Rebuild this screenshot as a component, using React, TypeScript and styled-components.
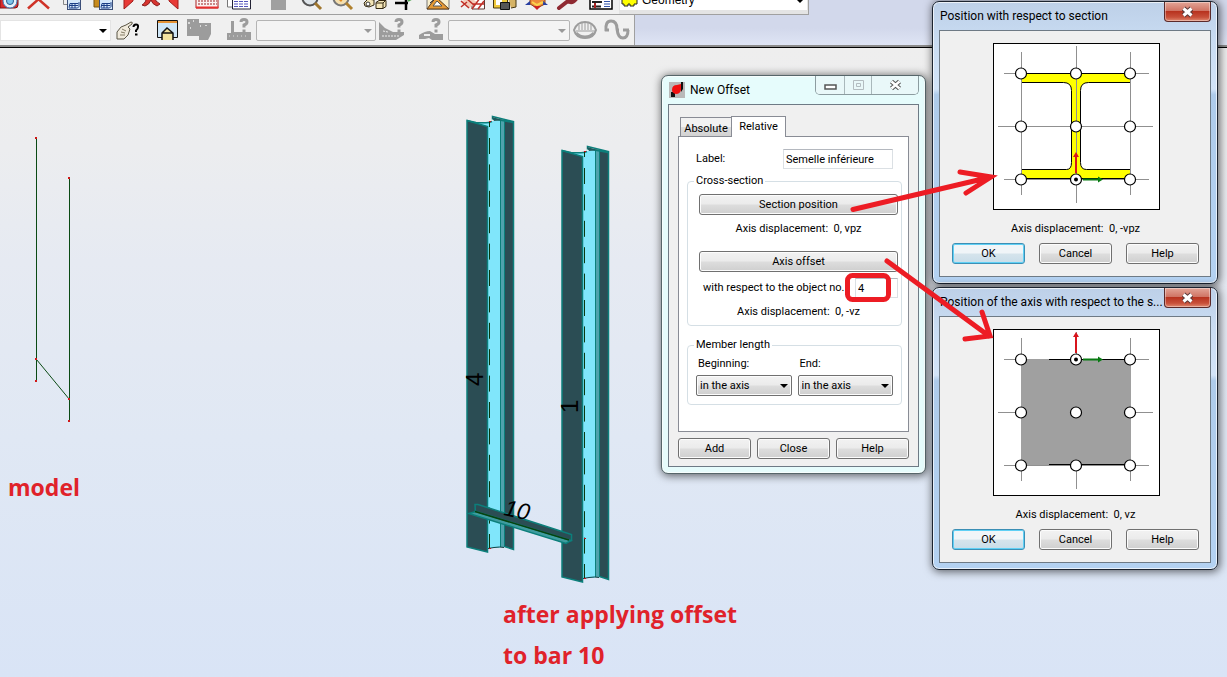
import React from "react";
import styled, { createGlobalStyle, css } from "styled-components";

const ui = 'Roboto, "Liberation Sans", sans-serif';
const caption = 'Roboto, "Noto Sans", sans-serif';
const red = "#ed1c24";

const GlobalStyle = createGlobalStyle`
  *, *::before, *::after { box-sizing: border-box; }
  body { margin: 0; }
  button, input, select, legend, label { font: inherit; color: inherit; }
`;

const Desktop = styled.div`
  position: relative;
  display: flex;
  flex-direction: column;
  min-height: 100vh;
  overflow: hidden;
  font: 11px/16px ${ui};
  color: #000;
`;

/* ---------- toolbars ---------- */

const ToolArea = styled.header`
  background: linear-gradient(#d2d8eb 60%, #e0e6f6);
  border-bottom: 1px solid #000;
  box-shadow: inset 0 -2px 0 #8c8c8c;
  padding-bottom: 2px;
`;

const ToolRow = styled.div<{ $height: number; $clipped?: boolean }>`
  display: flex;
  width: fit-content;
  height: ${(p) => p.$height}px;
  align-items: ${(p) => (p.$clipped ? "flex-end" : "center")};
  overflow: hidden;
  background: #f0f0f0;
  border-right: 1px solid #a0a0a0;
  ${(p) => p.$clipped && css`border-bottom: 1px solid #a0a0a0;`}
`;

const ToolButton = styled.button`
  display: block;
  flex: none;
  padding: 0;
  border: 0;
  background: none;
  svg { display: block; }
`;

const ToolCombo = styled.div<{ $width: number; $tone: "open" | "off" | "bare" }>`
  position: relative;
  flex: none;
  width: ${(p) => p.$width}px;
  select {
    appearance: none;
    display: block;
    width: 100%;
    height: ${(p) => (p.$tone === "bare" ? 26 : 21)}px;
    padding: 0 20px 0 ${(p) => (p.$tone === "bare" ? 22 : 4)}px;
    border: ${(p) => (p.$tone === "off" ? "1px solid #b4b4b4" : "1px solid #e4e4e4")};
    border-bottom-width: ${(p) => (p.$tone === "bare" ? 4 : 1)}px;
    border-radius: ${(p) => (p.$tone === "off" ? 2 : 0)}px;
    background: ${(p) => (p.$tone === "off" ? "#f4f4f4" : "#fff")};
    font: 12px/16px "Liberation Sans", sans-serif;
    opacity: 1;
  }
  svg { position: absolute; pointer-events: none; }
  .arrow { right: 4px; top: ${(p) => (p.$tone === "bare" ? 11 : 9)}px; }
  .tag { left: 2px; bottom: 7px; }
`;

/* ---------- windows ---------- */

const Frame = styled.section<{ $left: number; $top: number; $width: number; $blue?: boolean }>`
  position: absolute;
  left: ${(p) => p.$left}px;
  top: ${(p) => p.$top}px;
  width: ${(p) => p.$width}px;
  padding: 0 6px 6px;
  border: 1px solid ${(p) => (p.$blue ? "#1c2430" : "#56666a")};
  border-radius: 7px;
  background: ${(p) =>
    p.$blue
      ? "linear-gradient(#bdd0e8 0, #c9dcf2 14%, #d3e4f8 31%, #aecbea 33%, #b4d2f2 100%)"
      : "#e6fcfc"};
  box-shadow: inset 0 0 0 1px #ffffffb0, 1px 1px 9px 1px #00000090;
`;

const TitleBar = styled.div`
  display: flex;
  align-items: flex-start;
  height: 28px;
`;

const Title = styled.h2`
  flex: 1;
  min-width: 0;
  margin: 5px 0 0 1px;
  font: 400 12px/18px ${caption};
  white-space: nowrap;
`;

const AppIcon = styled.svg`
  margin: 6px 4px 0 1px;
`;

const CaptionButtons = styled.div`
  display: flex;
  height: 19px;
  border: 1px solid #8c9ca0;
  border-top: 0;
  border-radius: 0 0 5px 5px;
  overflow: hidden;
`;

const CaptionButton = styled.button<{ $width: number }>`
  width: ${(p) => p.$width}px;
  padding: 0;
  border: 0;
  background: #e9f8f9;
  & + & { border-left: 1px solid #a9b8bb; }
  svg { display: block; margin: 0 auto; }
`;

const CloseButton = styled.button`
  flex: none;
  width: 47px;
  height: 20px;
  padding: 0;
  border: 1px solid #5b2a2a;
  border-top: 0;
  border-radius: 0 0 4px 4px;
  background: linear-gradient(#e3a597 0, #d07565 45%, #b8331f 50%, #c8503a 80%, #e08a70);
  box-shadow: inset 0 0 0 1px #ffffff60;
  svg { display: block; margin: 0 auto; }
`;

const Client = styled.div<{ $pad: string }>`
  padding: ${(p) => p.$pad};
  border: 1px solid #6e7a85;
  background: #f0f0f0;
`;

const PushButton = styled.button<{ $width: number; $primary?: boolean }>`
  flex: none;
  display: block;
  width: ${(p) => p.$width}px;
  height: 21px;
  padding: 0;
  border: 1px solid ${(p) => (p.$primary ? "#3c8fb5" : "#707070")};
  border-radius: 3px;
  line-height: 19px;
  background: ${(p) =>
    p.$primary
      ? "linear-gradient(#f0f5f8 48%, #d5e4ec 52%, #c8dde9)"
      : "linear-gradient(#f2f2f2 0, #ebebeb 48%, #dddddd 52%, #cfcfcf)"};
  box-shadow: inset 0 0 0 1px ${(p) => (p.$primary ? "#5fd0f5" : "#fcfcfc")};
`;

const ButtonRow = styled.div<{ $top: number }>`
  display: flex;
  justify-content: space-between;
  margin-top: ${(p) => p.$top}px;
`;

const Tabs = styled.div`
  display: flex;
  align-items: flex-end;
  padding-left: 2px;
`;

const Tab = styled.button<{ $active?: boolean }>`
  position: relative;
  height: ${(p) => (p.$active ? 21 : 19)}px;
  width: ${(p) => (p.$active ? 55 : 52)}px;
  margin-bottom: ${(p) => (p.$active ? -1 : 0)}px;
  padding: ${(p) => (p.$active ? 0 : 2)}px 0 0;
  border: 1px solid #898c95;
  border-bottom: 0;
  & + & { margin-left: -1px; }
  line-height: 18px;
  background: ${(p) => (p.$active ? "#fff" : "linear-gradient(#f2f2f2 48%, #dedede 52%, #d2d2d2)")};
`;

const TabPanel = styled.div`
  height: 296px;
  padding: 12px 6px 0 8px;
  border: 1px solid #898c95;
  background: #fff;
`;

const LabelRow = styled.div`
  display: flex;
  align-items: center;
  justify-content: space-between;
  padding: 0 9px;
`;

const TextBox = styled.input<{ $width: number }>`
  width: ${(p) => p.$width}px;
  height: 20px;
  padding: 0 3px 0 2px;
  border: 1px solid #dbe0e4;
  border-top-color: #b4b8bf;
  background: #fff;
`;

const Group = styled.fieldset<{ $top: number; $pad: string }>`
  min-width: 0;
  margin: ${(p) => p.$top}px 0 0;
  padding: ${(p) => p.$pad};
  border: 1px solid #d5dfe5;
  border-radius: 4px;
  legend {
    margin-left: -2px;
    padding: 0 2px;
    line-height: 14px;
  }
`;

const GroupRows = styled.div`
  padding-left: 3px;
`;

const Note = styled.p<{ $top: number; $bottom?: number }>`
  margin: ${(p) => p.$top}px 0 ${(p) => p.$bottom ?? 0}px;
  text-align: center;
  white-space: pre;
`;

const ObjectRow = styled.div`
  display: flex;
  align-items: center;
  justify-content: space-between;
  height: 20px;
  margin-top: 6px;
  padding-left: 4px;
  white-space: nowrap;
`;

const Pair = styled.div`
  display: flex;
  gap: 6px;
`;

const Choice = styled.div`
  position: relative;
  width: 96px;
  label { display: block; margin: 0 0 3px 2px; }
  select {
    appearance: none;
    display: block;
    width: 100%;
    height: 21px;
    padding: 0 3px;
    border: 1px solid #707070;
    border-radius: 2px;
    background: linear-gradient(#f2f2f2 0, #ebebeb 48%, #dddddd 52%, #cfcfcf);
    box-shadow: inset 0 0 0 1px #fcfcfc;
  }
  svg { position: absolute; right: 4px; bottom: 8px; pointer-events: none; }
`;

const Picture = styled.svg`
  display: block;
  width: 167px;
  height: 167px;
  margin-left: 41px;
  border: 1px solid #000;
  background: #fff;
`;

/* ---------- drawing area ---------- */

const Canvas = styled.main`
  position: relative;
  flex: 1;
  background: linear-gradient(#eeeeee 0, #ecedef 16%, #e6eaf2 34%, #e0e8f4 62%, #d9e4f6 100%);
`;

const Scene = styled.svg`
  position: absolute;
  left: 0;
  top: 0;
`;

const Remark = styled.p<{ $left: number; $top: number }>`
  position: absolute;
  left: ${(p) => p.$left}px;
  top: ${(p) => p.$top}px;
  margin: 0;
  font: 700 23px/41px "Open Sans", "Noto Sans", sans-serif;
  color: #e0222a;
  white-space: pre-line;
`;

const Markup = styled.svg`
  position: absolute;
  left: 840px;
  top: 160px;
  pointer-events: none;
`;

const DownArrow = ({ color = "#000", className }: { color?: string; className?: string }) => (
  <svg className={className} width="8" height="4" viewBox="0 0 8 4">
    <path d="M0 0h8L4 4z" fill={color} />
  </svg>
);

type Tool = { name: string; x: number; w: number; art: React.ReactNode };

const table = (x: number) => (
  <g>
    <rect x={x + 5.5} y="-3.500" width="13" height="13" fill="#d5e8fa" stroke="#3c4f78" />
    <path d={`M${x + 7} 7.500l1-4h8l1-1v4l-1.500 1.500h-8.500M${x + 10} 4v4M${x + 13} 4v4M${x + 7} 5.500h9`} fill="none" stroke="#1c3f86" />
  </g>
);

const mainTools: Tool[] = [
  { name: "Capture", x: 0, w: 24, art: <g><path d="M0-2h18v7q0 3-3 3H0z" fill="#d92b2b" stroke="#7c1414" /><circle cx="10" cy="1" r="7" fill="#e8f3fb" stroke="#3b7cb8" /><circle cx="10" cy="1" r="3.500" fill="#7cc4ec" stroke="#2d5f90" /></g> },
  { name: "Delete", x: 24, w: 32, art: <path d="M28 8.500 41-3M49 8.500 36-3" stroke="#cf3328" strokeWidth="2.500" fill="none" /> },
  { name: "Copy", x: 56, w: 32, art: <g><path d="M63.500-2v6.500h6" fill="#eee" stroke="#888" />{table(62)}</g> },
  { name: "Paste", x: 88, w: 32, art: <g><path d="M94-2h10v9H94z" fill="#c88b1c" stroke="#76520f" />{table(94)}</g> },
  { name: "Previous", x: 120, w: 20, art: <path d="M124-3v12l9-8v-4z" fill="#e83a36" stroke="#a01c1a" /> },
  { name: "Up", x: 140, w: 26, art: <path d="M142 5q4-2 5-9h7q1 6 6 8l-3 2q-5-2-6-6-2 5-6 6z" fill="#d83530" stroke="#8c2020" /> },
  { name: "Next", x: 166, w: 24, art: <path d="M178-3v12l-9-8v-4z" fill="#e83a36" stroke="#a01c1a" /> },
  { name: "Calculator", x: 190, w: 34, art: <g><path d="M196-3h22v11h-22z" fill="#fbf3f3" stroke="#a22" /><path d="M198 1h19M198 4h19" stroke="#b66" strokeWidth="1.500" strokeDasharray="2 1" /><path d="M196 7.500h22.500" stroke="#e83030" strokeWidth="2" /></g> },
  { name: "Tables", x: 224, w: 36, art: <g><path d="M227.500-2h14v9h-14z" fill="#fff" stroke="#777" /><path d="M232.500-2h18v11h-18z" fill="#fff" stroke="#223" /><path d="M234 1.500h15M234 4h15M234 6.500h15" stroke="#55b" strokeDasharray="4 1" /></g> },
  { name: "Stop", x: 260, w: 38, art: <path d="M271-2h15v12h-15z" fill="#a0a0a0" /> },
  { name: "Zoom", x: 298, w: 30, art: <g><circle cx="310" cy="-2" r="7.500" fill="#dfe5ea" stroke="#555" strokeWidth="2" /><path d="m315 3 6 6" stroke="#a0762e" strokeWidth="3" /></g> },
  { name: "Zoom window", x: 328, w: 32, art: <g><circle cx="341" cy="-2" r="7.500" fill="#f5dfae" stroke="#777" strokeWidth="2" /><path d="M337-2h7l-3 4z" fill="#e58c1e" /><path d="m346 3 6 6" stroke="#b0802e" strokeWidth="3" /></g> },
  { name: "View", x: 360, w: 32, art: <g><path d="M364 3l4-4 6 1v5l-5 2-4-1zM376 8.500v-6l3-2h7v6l-3 2zM376 3h7v5M383 3l3-3" fill="#f4e6b8" stroke="#342812" /><circle cx="368" cy="4" r="2" fill="#fff" stroke="#333" /></g> },
  { name: "Axes", x: 392, w: 32, art: <g><path d="M395 3h13M406-3v13" stroke="#000" strokeWidth="2.500" /><path d="m408 1 5-3" stroke="#4ea34e" strokeWidth="2" /></g> },
  { name: "Measure", x: 424, w: 32, art: <g><path d="M427-2h22v11h-22z" fill="#f8efcf" stroke="#777" /><path d="M427 9h22L436-3z" fill="#e69a36" stroke="#5b3b18" /><path d="M433 6h9l-5-5z" fill="#fff" stroke="#555" /><path d="m430 3 7-6" stroke="#223" /></g> },
  { name: "Section", x: 456, w: 32, art: <g><path d="M472-2h12.500v11H472z" fill="#fff" stroke="#5f3a35" /><path d="m461 2 8-5 8 5-8 6z" fill="#f4cdbb" /><path d="m461 1 8 7M466-2l9 8M472 9l8-11M478 9l6-8M473 4h11M461 7l6-5" stroke="#c03028" strokeWidth="1.500" /></g> },
  { name: "Layers", x: 488, w: 32, art: <g><path d="M493.500-3h14v11h-14z" fill="#efc83a" stroke="#4a3a10" /><path d="M496-2h6v7h-6z" fill="#fff" /><path d="M508-2h5l3 2v7l-5 1" fill="#d5b366" stroke="#453614" /><path d="M500.500 2.500h9v7h-9z" fill="#555" stroke="#111" /></g> },
  { name: "Explode", x: 520, w: 34, art: <g><path d="m530-2 7-2 8 2v6l-8 4-7-4z" fill="#ed8a3b" stroke="#8c4114" /><path d="m525 5 5-4v4zM548 5l-5-4v4z" fill="#283fa0" /><path d="m533 6 4 4 4-4z" fill="#c22" /><path d="m532 2 5 3 6-3" fill="none" stroke="#fbd24d" strokeWidth="2" /></g> },
  { name: "Wrench", x: 554, w: 32, art: <path d="m559 8 9-7q-1-5 5-5M568 1q4 3 8-2" fill="none" stroke="#8f2a32" strokeWidth="4" strokeLinecap="round" /> },
  { name: "Options", x: 586, w: 33, art: <g><path d="M590-3h22v12h-22z" fill="#fff" stroke="#000" strokeWidth="1.500" /><path d="M592 2h10M592 6.500h9" stroke="#222" strokeWidth="2" /><path d="M595 3v5" stroke="#a22" strokeWidth="2" /><path d="M604 1.500h6M604 4h6M604 6.500h6" stroke="#35a" /></g> },
];

const gray = "#9c9c9c";
const questionMark = (x: number) => (
  <path d={`M${x} 22q0-2.500 3-2.500t3 2.500q0 2-3 3v2.500M${x + 1.5} 31h3`} fill="none" stroke={gray} strokeWidth="3" />
);

const helpTools: Tool[] = [
  { name: "What is this", x: 111, w: 37, art: <g><path d="m117 32 4-5 5-2 5-3q2 0 1 2l-4 3 2 2-2 6-4 4h-7z" fill="#f0eadc" stroke="#5b5646" /><path d="m122 29 4 2M121 32l4 1M120 35l5 0" stroke="#847c66" /><path d="M133.500 27q0-2.500 2.500-2.500t2 2.500q0 2-2 3.500v1.500M135 34.500h2.500" fill="none" stroke="#000" strokeWidth="2" /></g> },
  { name: "Supports", x: 148, w: 35, art: <g><path d="M157.500 20.500h20v17h-20z" fill="#cfe6f7" stroke="#111" /><path d="M158 21h19v2h-19z" fill="#e59336" /><path d="M162 40v-7l5-5 6 5v7M162 33h11" fill="#f2e3a0" stroke="#111" strokeWidth="1.500" /></g> },
  { name: "Releases", x: 183, w: 35, art: <g><path d="M187 19h12v4h12v11l-3 6h-9v-4h-12z" fill={gray} /><path d="M189 22v2M193 21h1M190 28h1M200 26h1M206 25v1" stroke="#eee" strokeWidth="1.500" /></g> },
  { name: "Loads", x: 218, w: 38, art: <g><path d="M227 33h4V21h3v11h17v8h-24z" fill={gray} />{questionMark(241)}<path d="M229 36h20" stroke="#ddd" strokeDasharray="1 3" /></g> },
];
const chartTools: Tool[] = [
  { name: "Diagrams", x: 376, w: 35, art: <g><path d="M379 22l6 6 8 4h11v3l-8 5h-17z" fill={gray} />{questionMark(396)}<path d="M382 36h17M383 31l5 1" stroke="#eee" strokeDasharray="2 1" /></g> },
  { name: "Results", x: 411, w: 37, art: <g><path d="M419 39v-4q6-4 11-4l5 3h8v6h-11l-3-2-4 1z" fill={gray} /><path d="M424 35h6" stroke="#eee" strokeWidth="2" />{questionMark(433)}</g> },
];
const waveTools: Tool[] = [
  { name: "Envelope", x: 570, w: 30, art: <g fill="none" stroke={gray} strokeWidth="2"><path d="M574 30q3-8 11-8t11 8q-2 8-11 8t-11-8z" /><path d="M576 31h19M579 30v-5M582 30v-7M585 30v-7M588 30v-7M591 30v-6" strokeWidth="1" /><path d="M576 33q4 4 9 4t9-4" strokeWidth="3" /></g> },
  { name: "Wave", x: 600, w: 34, art: <path d="M606 31q-1-10 5-10t6 8q1 9 6 9t5-8M605 30h4M616 30h3M623 30h6" fill="none" stroke={gray} strokeWidth="3" /> },
];

const Tools = ({ items, y, h }: { items: Tool[]; y: number; h: number }) => (
  <>
    {items.map((t) => (
      <ToolButton key={t.name} type="button" aria-label={t.name}>
        <svg width={t.w} height={h} viewBox={`${t.x} ${y} ${t.w} ${h}`}>{t.art}</svg>
      </ToolButton>
    ))}
  </>
);

const GridPicture = ({ kind }: { kind: "beam" | "block" }) => {
  const xs = [27, 82, 136];
  const ys = [29, 82, 135];
  const origin = kind === "beam" ? 135 : 29;
  return (
    <Picture viewBox="0 0 165 165" role="img" aria-label={kind === "beam" ? "I-section" : "Bounding block"}>
      {kind === "beam" ? (
        <path
          d="M27.500 29.500h109v9H94.500q-8 0-8 8v72q0 7 6 7h44v9h-109v-9h45q5 0 5-7v-72q0-8-8-8H27.500z"
          fill="#ff0"
          stroke="#000"
        />
      ) : null}
      <path
        d="M10 29.500h145M4 82.500h155M10 135.500h145M27.500 8v143M82.500 2v157M136.500 8v143"
        stroke="#909090"
        fill="none"
      />
      {kind === "beam" ? (
        <path d="M27 29.500h110M27 134.500h110" stroke="#000" />
      ) : (
        <g>
          <path d="M27 29h110v106H27z" fill="#a0a0a0" />
          <path d="M55 29.500h81M55 134.500h81" stroke="#000" />
        </g>
      )}
      {ys.map((y) =>
        xs.map((x) => (
          <circle key={`${x}-${y}`} cx={x} cy={y + 0.5} r="5.500" fill="#fff" stroke="#000" strokeWidth="1.200" />
        )),
      )}
      <circle cx="82" cy={origin + 0.5} r="2" />
      <path d={`M82 ${origin - 6}V${origin - 23}`} stroke="#d8141c" strokeWidth="2" />
      <path d={`M79 ${origin - 22}l3-5 3 5z`} fill="#d8141c" />
      <path d={`M89 ${origin + 0.5}h17`} stroke="#087a12" strokeWidth="2" />
      <path d={`M104 ${origin - 2.5}l5 3-5 3z`} fill="#087a12" />
    </Picture>
  );
};

const PositionDialog = ({ top, title, kind, note }: { top: number; title: string; kind: "beam" | "block"; note: string }) => (
  <Frame $left={932} $top={top} $width={286} $blue>
    <TitleBar>
      <Title>{title}</Title>
      <CloseButton type="button" aria-label="Close">
        <svg width="15" height="12" viewBox="0 0 15 12">
          <path d="m3.500 2.500 8 7M11.500 2.500l-8 7" stroke="#5a3a3a" strokeWidth="5" />
          <path d="m3.500 2.500 8 7M11.500 2.500l-8 7" stroke="#fff" strokeWidth="3" />
        </svg>
      </CloseButton>
    </TitleBar>
    <Client $pad="12px 11px 12px 12px">
      <GridPicture kind={kind} />
      <Note $top={11}>{note}</Note>
      <ButtonRow $top={6}>
        <PushButton type="button" $width={73} $primary>OK</PushButton>
        <PushButton type="button" $width={73}>Cancel</PushButton>
        <PushButton type="button" $width={73}>Help</PushButton>
      </ButtonRow>
    </Client>
  </Frame>
);

const Choose = ({ id, label }: { id: string; label: string }) => (
  <Choice>
    <label htmlFor={id}>{label}</label>
    <select id={id}>
      <option>in the axis</option>
    </select>
    <DownArrow />
  </Choice>
);

const OffsetDialog = () => (
  <Frame $left={661} $top={75} $width={265}>
    <TitleBar>
      <AppIcon width="16" height="16" viewBox="0 0 16 16">
        <path d="M0 0h16v16H0z" fill="#b9b9b9" />
        <path d="M12 0h2v7l-2 3zM2 10h4v5H2z" fill="#111" />
        <path d="M3 8q0-5 5-5l4-1v6q-1 4-5 4-4-1-4-4z" fill="#f01010" />
      </AppIcon>
      <Title>New Offset</Title>
      <CaptionButtons>
        <CaptionButton type="button" aria-label="Minimize" $width={28}>
          <svg width="13" height="10" viewBox="0 0 13 10"><path d="M1 5h11v4H1z" fill="#fff" stroke="#555" strokeWidth="1.500" /></svg>
        </CaptionButton>
        <CaptionButton type="button" aria-label="Maximize" $width={27}>
          <svg width="13" height="10" viewBox="0 0 13 10"><path d="M1.500.5h10v9h-10zM4.500 3.500h4v3h-4z" fill="none" stroke="#b3bcc0" /></svg>
        </CaptionButton>
        <CaptionButton type="button" aria-label="Close" $width={47}>
          <svg width="13" height="12" viewBox="0 0 13 12">
            <path d="m2.500 2.500 8 7M10.500 2.500l-8 7" stroke="#555" strokeWidth="4.500" />
            <path d="m2.500 2.500 8 7M10.500 2.500l-8 7" stroke="#fff" strokeWidth="2.500" />
          </svg>
        </CaptionButton>
      </CaptionButtons>
    </TitleBar>
    <Client $pad="11px 9px 7px">
      <Tabs role="tablist">
        <Tab type="button" role="tab">Absolute</Tab>
        <Tab type="button" role="tab" aria-selected $active>Relative</Tab>
      </Tabs>
      <TabPanel role="tabpanel">
        <LabelRow>
          <label htmlFor="offset-label">Label:</label>
          <TextBox id="offset-label" $width={110} defaultValue="Semelle inférieure" />
        </LabelRow>
        <Group $top={5} $pad="6px 3px 5px 8px">
          <legend>Cross-section</legend>
          <GroupRows>
            <PushButton type="button" $width={199}>Section position</PushButton>
            <Note $top={6} $bottom={14}>{"Axis displacement:  0, vpz"}</Note>
            <PushButton type="button" $width={199}>Axis offset</PushButton>
            <ObjectRow>
              <label htmlFor="object-number">with respect to the object no.</label>
              <TextBox id="object-number" $width={43} defaultValue="4" />
            </ObjectRow>
            <Note $top={6}>{"Axis displacement:  0, -vz"}</Note>
          </GroupRows>
        </Group>
        <Group $top={12} $pad="4px 8px 8px">
          <legend>Member length</legend>
          <Pair>
            <Choose id="member-beginning" label="Beginning:" />
            <Choose id="member-end" label="End:" />
          </Pair>
        </Group>
      </TabPanel>
      <ButtonRow $top={6}>
        <PushButton type="button" $width={73}>Add</PushButton>
        <PushButton type="button" $width={73}>Close</PushButton>
        <PushButton type="button" $width={73}>Help</PushButton>
      </ButtonRow>
    </Client>
  </Frame>
);

const Column = ({ dx, dy }: { dx: number; dy: number }) => (
  <g transform={`translate(${dx} ${dy})`}>
    <path d="M488 125l12-4v427H488z" fill="#80e6fb" />
    <path d="M475 123l8 0 7-1 3-1 8-1v4l-13 4z" fill="#80e6fb" />
    <path d="M500 121h5v426h-5z" fill="#4fa3ad" />
    <path d="M500.500 121v426M504.500 121v426" stroke="#0c7f7b" />
    <path d="M505 121l8.500 1.500v427l-8.500-3z" fill="#2b4d54" />
    <path d="M492.500 119.500v-3l21 5v428l-9-3M493 119l9 1.500 11 2" fill="none" stroke="#0c7f7b" strokeWidth="1.500" />
    <path d="M492 117l11 3-9 1z" fill="#1e5a5c" />
    <path d="M467 120.500l20.500 6v425.500L467 547z" fill="#2b4d54" stroke="#0c7f7b" strokeWidth="1.500" />
    <path d="M467 120.500l9 2q12 1 16-1" fill="none" stroke="#0c7f7b" strokeWidth="1.500" />
    <path d="M488 548.500l6-1q6-1 10 0" fill="none" stroke="#123f42" />
    <path d="M489.500 122v5" stroke="#0a3b12" />
    <path d="M489.500 138V549" stroke="#0a3b12" strokeDasharray="16 10.400" />
    <path d="M489 121h2v1h-2zM489 548h2v1h-2z" fill="#c01020" />
  </g>
);

const nodes = [[36, 138], [69, 178], [36, 359], [36, 381], [69, 399], [69, 421]];

export default function App() {
  return (
    <Desktop>
      <GlobalStyle />
      <ToolArea>
        <ToolRow $height={15} $clipped>
          <Tools items={mainTools} y={0} h={14} />
          <ToolCombo $width={189} $tone="bare">
            <select aria-label="Layout"><option>Geometry</option></select>
            <svg className="tag" width="18" height="9" viewBox="0 0 18 9">
              <path d="M1 0h15v6h-3v2H9V6H7v2H3V6H1z" fill="#ff0" stroke="#222" />
            </svg>
            <DownArrow className="arrow" />
          </ToolCombo>
        </ToolRow>
        <ToolRow $height={30}>
          <ToolCombo $width={111} $tone="open">
            <select aria-label="Selection"><option></option></select>
            <DownArrow className="arrow" />
          </ToolCombo>
          <Tools items={helpTools} y={16} h={29} />
          <ToolCombo $width={120} $tone="off">
            <select aria-label="Load case" disabled><option></option></select>
            <DownArrow className="arrow" color="#999" />
          </ToolCombo>
          <Tools items={chartTools} y={16} h={29} />
          <ToolCombo $width={122} $tone="off">
            <select aria-label="Mode" disabled><option></option></select>
            <DownArrow className="arrow" color="#999" />
          </ToolCombo>
          <Tools items={waveTools} y={16} h={29} />
        </ToolRow>
      </ToolArea>

      <Canvas>
        <Scene width="640" height="550" viewBox="0 48 640 550" role="img" aria-label="Bar model">
          <path d="M36.500 138v243M69.500 178v243" stroke="#0a4a14" />
          <path d="M36.500 359.500l33 40" stroke="#0a4a14" />
          {nodes.map(([x, y]) => (
            <path key={`${x}-${y}`} d={`M${x - 1} ${y - 1}h2v2h-2z`} fill="#d01818" />
          ))}
          <Column dx={0} dy={0} />
          <Column dx={95} dy={30} />
          <path d="M475 504.500h3l93.500 30v6l-6 1-90-28z" fill="#2b4d54" stroke="#0c7f7b" strokeWidth="1.500" />
          <path d="M469 513.500l7-2 95 29-5 3z" fill="#3f9c9f" stroke="#0c7f7b" strokeWidth="1.500" />
          <path d="M475 511.500l94 28.500" stroke="#07420e" strokeWidth="1.500" />
          <g fontFamily="Liberation Sans, sans-serif" fontSize="24">
            <text transform="translate(483 386) rotate(-90)">4</text>
            <text transform="translate(578 413) rotate(-90)">1</text>
            <text transform="translate(503 515) rotate(12)" fontStyle="italic" fontSize="23">10</text>
          </g>
          <path d="M584 538h2v1h-2z" fill="#c01020" />
        </Scene>
        <Remark $left={8} $top={419}>model</Remark>
        <Remark $left={503} $top={546}>{"after applying offset\nto bar 10"}</Remark>
      </Canvas>

      <OffsetDialog />
      <PositionDialog top={1} title="Position with respect to section" kind="beam" note={"Axis displacement:  0, -vpz"} />
      <PositionDialog top={287} title="Position of the axis with respect to the s..." kind="block" note={"Axis displacement:  0, vz"} />

      <Markup width="160" height="190" viewBox="840 160 160 190" fill="none" stroke={red} strokeWidth="5" strokeLinecap="round">
        <rect x="847.500" y="275.500" width="41" height="24" rx="5" />
        <path d="M853 209.500 991 177M960 172l31 5-25 16" />
        <path d="M887 261l102 75M982 312l8 24-25 3" />
      </Markup>
    </Desktop>
  );
}
